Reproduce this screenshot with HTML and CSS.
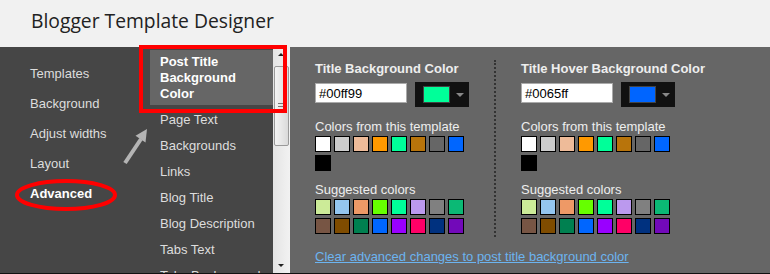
FILE: index.html
```html
<!DOCTYPE html>
<html lang="en">
<head>
    <meta charset="UTF-8">
    <title>Blogger Template Designer</title>
    <link rel="stylesheet" href="styles.css">
</head>
<body>
    <div class="header">Blogger Template Designer</div>
    <div class="main">
        <ul class="nav">
            <li>Templates</li>
            <li>Background</li>
            <li>Adjust widths</li>
            <li>Layout</li>
            <li class="active">Advanced</li>
        </ul>
        <ul class="sub">
            <li class="selected">Post Title Background Color</li>
            <li>Page Text</li>
            <li>Backgrounds</li>
            <li>Links</li>
            <li>Blog Title</li>
            <li>Blog Description</li>
            <li>Tabs Text</li>
            <li>Tabs Background</li>
        </ul>
        <div class="scrollbar">
            <div class="arrow-up"></div>
            <div class="thumb"><div class="grip"></div></div>
            <div class="arrow-down"></div>
        </div>
        <div class="content">
            <div class="columns">
                <div class="col">
                    <div class="label bold">Title Background Color</div>
                    <div class="picker">
                        <span class="hex">#00ff99</span>
                        <span class="pick-btn"><span class="current" style="background:#00ff99"></span><span class="caret"></span></span>
                    </div>
                    <div class="label gap">Colors from this template</div>
                    <div class="swatches template"></div>
                    <div class="label gap2">Suggested colors</div>
                    <div class="swatches suggested"></div>
                </div>
                <div class="col second">
                    <div class="label bold">Title Hover Background Color</div>
                    <div class="picker">
                        <span class="hex">#0065ff</span>
                        <span class="pick-btn"><span class="current" style="background:#0065ff"></span><span class="caret"></span></span>
                    </div>
                    <div class="label gap">Colors from this template</div>
                    <div class="swatches template"></div>
                    <div class="label gap2">Suggested colors</div>
                    <div class="swatches suggested"></div>
                </div>
            </div>
            <a class="clear-link" href="#">Clear advanced changes to post title background color</a>
        </div>
    </div>

    <!-- 注釈（赤枠・楕円・矢印） -->
    <svg class="marks" width="770" height="274" viewBox="0 0 770 274">
        <rect x="141" y="47" width="144" height="64" fill="none" stroke="#f00" stroke-width="4"/>
        <ellipse cx="66" cy="195" rx="49" ry="14" fill="none" stroke="#f00" stroke-width="4"/>
        <line x1="125" y1="163" x2="141" y2="139" stroke="#b4b4b4" stroke-width="4"/>
        <polygon points="147,129 135.5,135.8 145.5,142.4" fill="#b4b4b4"/>
    </svg>

    <script>
        const templateColors = ["#ffffff", "#cccccc", "#eebb99", "#ff9900", "#00ff99", "#b8740b", "#666666", "#0066ff", "#000000"];
        const suggestedColors = [
            "#cceb98", "#93c5ef", "#ee9966", "#66ff00", "#00ff99", "#bb99ee", "#808080", "#0bb975",
            "#775544", "#7f4c00", "#008050", "#0066ff", "#9900ff", "#ff0066", "#00317f", "#7209b9"
        ];

        const fill = (selector, colors) => {
            document.querySelectorAll(selector).forEach((box) => {
                colors.forEach((c) => {
                    const s = document.createElement("span");
                    s.className = "swatch";
                    s.style.background = c;
                    box.appendChild(s);
                });
            });
        };

        fill(".swatches.template", templateColors);
        fill(".swatches.suggested", suggestedColors);
    </script>
</body>
</html>
```

FILE: styles.css
```css
body {
    margin: 0;
    width: 770px;
    height: 274px;
    overflow: hidden;
    position: relative;
    font-family: "Liberation Sans", Arial, sans-serif;
    font-size: 13px;
    background: #f1f1f1;
}
ul {
    list-style: none;
    margin: 0;
    padding: 0;
}
.header {
    height: 47px;
    padding-left: 31px;
    line-height: 42px;
    font-family: "Open Sans", sans-serif;
    font-size: 19.3px;
    color: #222;
}
.main {
    display: flex;
    height: 226px;
    border-bottom: 1px solid #111;
    background: #464646;
}
.nav {
    width: 150px;
    padding-top: 12px;
    padding-left: 30px;
    box-sizing: border-box;
    color: #ddd;
}
.nav li {
    line-height: 30px;
}
.nav .active {
    font-weight: bold;
    color: #fff;
}
.sub {
    width: 123px;
    padding-top: 3px;
    overflow: hidden;
    color: #ddd;
}
.sub li {
    line-height: 26px;
    padding-left: 10px;
    white-space: nowrap;
}
.sub .selected {
    background: #666;
    color: #fff;
    font-weight: bold;
    line-height: 16px;
    padding: 4px 10px 3px;
    margin-bottom: 2px;
    white-space: normal;
}
.scrollbar {
    width: 17px;
    position: relative;
    background: linear-gradient(to right, #e4e4e4, #f2f2f2);
}
.arrow-up,
.arrow-down {
    position: absolute;
    left: 5px;
    width: 0;
    height: 0;
    border-left: 3px solid transparent;
    border-right: 3px solid transparent;
}
.arrow-up {
    top: 6px;
    border-bottom: 3px solid #222;
}
.arrow-down {
    bottom: 6px;
    border-top: 3px solid #222;
}
.thumb {
    position: absolute;
    top: 19px;
    left: 1px;
    width: 13px;
    height: 78px;
    border: 1px solid #9a9a9a;
    border-radius: 2px;
    background: linear-gradient(to right, #f4f4f4, #dadada);
}
.grip {
    position: absolute;
    top: 36px;
    left: 3px;
    width: 7px;
    height: 5px;
    border-top: 1px solid #777;
    border-bottom: 1px solid #777;
}
.grip::after {
    content: "";
    position: absolute;
    top: 2px;
    left: 0;
    width: 7px;
    border-top: 1px solid #777;
}
.content {
    flex: 1;
    background: #666;
    padding: 13px 0 0 25px;
    color: #eee;
}
.columns {
    display: flex;
}
.col {
    width: 179px;
    padding-bottom: 3px;
}
.col.second {
    border-left: 2px dotted #333;
    padding-left: 25px;
    width: 200px;
}
.label {
    line-height: 16px;
}
.bold {
    font-weight: bold;
    padding-top: 1px;
}
.gap {
    margin-top: 12px;
}
.gap2 {
    margin-top: 11px;
}
.picker {
    display: flex;
    align-items: flex-start;
    margin-top: 5px;
}
.hex {
    width: 92px;
    height: 20px;
    box-sizing: border-box;
    margin-top: 1px;
    background: #fff;
    border: 1px solid #aaa;
    padding-left: 3px;
    color: #000;
    line-height: 19px;
}
.pick-btn {
    display: flex;
    align-items: center;
    width: 54px;
    height: 25px;
    margin-left: 8px;
    padding-left: 8px;
    box-sizing: border-box;
    background: #111;
}
.current {
    width: 27px;
    height: 17px;
    box-sizing: border-box;
    border: 1px solid #444;
}
.caret {
    margin-left: 6px;
    width: 0;
    height: 0;
    border-left: 4px solid transparent;
    border-right: 4px solid transparent;
    border-top: 4px solid #888;
}
.swatches {
    display: flex;
    flex-wrap: wrap;
    width: 152px;
    gap: 3px;
    margin-top: 1px;
}
.swatch {
    width: 16px;
    height: 16px;
    box-sizing: border-box;
    border: 1px solid #000;
}
.clear-link {
    display: inline-block;
    margin-top: 12px;
    line-height: 16px;
    color: #6cb4f0;
}
.marks {
    position: absolute;
    top: 0;
    left: 0;
    pointer-events: none;
}
```
